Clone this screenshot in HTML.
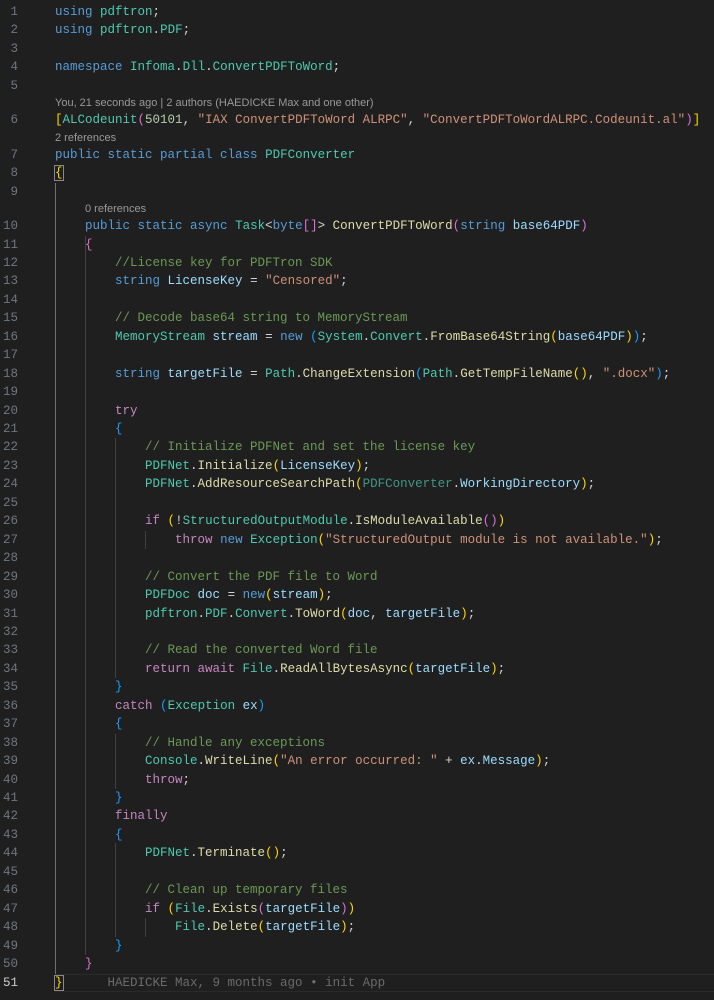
<!DOCTYPE html>
<html><head><meta charset="utf-8"><style>
body{margin:0;background:#1f1f1f;width:714px;height:1000px;overflow:hidden;position:relative;font-family:"Liberation Mono","DejaVu Sans Mono",monospace;font-size:12.5px;color:#d4d4d4}
.r{position:absolute;left:0;width:714px;height:18.45px;line-height:18.45px;white-space:pre}
.n{position:absolute;right:696px;color:#6e7681;text-align:right}
.c{position:absolute;left:55px}
.cl{position:absolute;left:55px;font-family:"Liberation Sans",sans-serif;font-size:11px;color:#999;white-space:pre;line-height:16px;height:16px}
.g{position:absolute;width:1px;background:#404040}
.k{color:#569cd6}.p{color:#c586c0}.t{color:#4ec9b0}.f{color:#dcdcaa}.v{color:#9cdcfe}.s{color:#ce9178}.m{color:#6a9955}.nu{color:#b5cea8}
.b1{color:#ffd700}.b2{color:#da70d6}.b3{color:#179fff}
</style></head><body>
<div class="g" style="left:55px;top:182.6px;height:791px;background:#707070"></div>
<div class="g" style="left:85px;top:235.5px;height:719.5px"></div>
<div class="g" style="left:115px;top:438.45px;height:239.85px"></div>
<div class="g" style="left:115px;top:733.65px;height:55.35px"></div>
<div class="g" style="left:115px;top:843.4px;height:93.2px"></div>
<div class="g" style="left:145px;top:530.7px;height:18.45px"></div>
<div class="g" style="left:145px;top:918.15px;height:18.45px"></div>

<div class="r" style="top:3px"><span class="n">1</span><span class="c"><span class="k">using</span> <span class="t">pdftron</span>;</span></div>
<div class="r" style="top:21.45px"><span class="n">2</span><span class="c"><span class="k">using</span> <span class="t">pdftron</span>.<span class="t">PDF</span>;</span></div>
<div class="r" style="top:39.9px"><span class="n">3</span></div>
<div class="r" style="top:58.35px"><span class="n">4</span><span class="c"><span class="k">namespace</span> <span class="t">Infoma</span>.<span class="t">Dll</span>.<span class="t">ConvertPDFToWord</span>;</span></div>
<div class="r" style="top:76.8px"><span class="n">5</span></div>
<div class="cl" style="top:95.25px">You, 21 seconds ago | 2 authors (HAEDICKE Max and one other)</div>
<div class="r" style="top:111.25px"><span class="n">6</span><span class="c"><span class="b1">[</span><span class="t">ALCodeunit</span><span class="b2">(</span><span class="nu">50101</span>, <span class="s">"IAX ConvertPDFToWord ALRPC"</span>, <span class="s">"ConvertPDFToWordALRPC.Codeunit.al"</span><span class="b2">)</span><span class="b1">]</span></span></div>
<div class="cl" style="top:129.7px">2 references</div>
<div class="r" style="top:145.7px"><span class="n">7</span><span class="c"><span class="k">public static partial class</span> <span class="t">PDFConverter</span></span></div>
<div class="r" style="top:164.15px"><span class="n">8</span><span class="c"><span class="b1" style="outline:1px solid #888">{</span></span></div>
<div class="r" style="top:182.6px"><span class="n">9</span></div>
<div class="cl" style="top:201.05px;left:85px">0 references</div>
<div class="r" style="top:217.05px"><span class="n">10</span><span class="c">    <span class="k">public static async</span> <span class="t">Task</span>&lt;<span class="k">byte</span><span class="b2">[]</span>&gt; <span class="f">ConvertPDFToWord</span><span class="b2">(</span><span class="k">string</span> <span class="v">base64PDF</span><span class="b2">)</span></span></div>
<div class="r" style="top:235.5px"><span class="n">11</span><span class="c">    <span class="b2">{</span></span></div>
<div class="r" style="top:253.95px"><span class="n">12</span><span class="c">        <span class="m">//License key for PDFTron SDK</span></span></div>
<div class="r" style="top:272.4px"><span class="n">13</span><span class="c">        <span class="k">string</span> <span class="v">LicenseKey</span> = <span class="s">"Censored"</span>;</span></div>
<div class="r" style="top:290.85px"><span class="n">14</span></div>
<div class="r" style="top:309.3px"><span class="n">15</span><span class="c">        <span class="m">// Decode base64 string to MemoryStream</span></span></div>
<div class="r" style="top:327.75px"><span class="n">16</span><span class="c">        <span class="t">MemoryStream</span> <span class="v">stream</span> = <span class="k">new</span> <span class="b3">(</span><span class="t">System</span>.<span class="t">Convert</span>.<span class="f">FromBase64String</span><span class="b1">(</span><span class="v">base64PDF</span><span class="b1">)</span><span class="b3">)</span>;</span></div>
<div class="r" style="top:346.2px"><span class="n">17</span></div>
<div class="r" style="top:364.65px"><span class="n">18</span><span class="c">        <span class="k">string</span> <span class="v">targetFile</span> = <span class="t">Path</span>.<span class="f">ChangeExtension</span><span class="b3">(</span><span class="t">Path</span>.<span class="f">GetTempFileName</span><span class="b1">()</span>, <span class="s">".docx"</span><span class="b3">)</span>;</span></div>
<div class="r" style="top:383.1px"><span class="n">19</span></div>
<div class="r" style="top:401.55px"><span class="n">20</span><span class="c">        <span class="p">try</span></span></div>
<div class="r" style="top:420px"><span class="n">21</span><span class="c">        <span class="b3">{</span></span></div>
<div class="r" style="top:438.45px"><span class="n">22</span><span class="c">            <span class="m">// Initialize PDFNet and set the license key</span></span></div>
<div class="r" style="top:456.9px"><span class="n">23</span><span class="c">            <span class="t">PDFNet</span>.<span class="f">Initialize</span><span class="b1">(</span><span class="v">LicenseKey</span><span class="b1">)</span>;</span></div>
<div class="r" style="top:475.35px"><span class="n">24</span><span class="c">            <span class="t">PDFNet</span>.<span class="f">AddResourceSearchPath</span><span class="b1">(</span><span class="t" style="opacity:.7">PDFConverter</span>.<span class="v">WorkingDirectory</span><span class="b1">)</span>;</span></div>
<div class="r" style="top:493.8px"><span class="n">25</span></div>
<div class="r" style="top:512.25px"><span class="n">26</span><span class="c">            <span class="p">if</span> <span class="b1">(</span>!<span class="t">StructuredOutputModule</span>.<span class="f">IsModuleAvailable</span><span class="b2">()</span><span class="b1">)</span></span></div>
<div class="r" style="top:530.7px"><span class="n">27</span><span class="c">                <span class="p">throw</span> <span class="k">new</span> <span class="t">Exception</span><span class="b1">(</span><span class="s">"StructuredOutput module is not available."</span><span class="b1">)</span>;</span></div>
<div class="r" style="top:549.15px"><span class="n">28</span></div>
<div class="r" style="top:567.6px"><span class="n">29</span><span class="c">            <span class="m">// Convert the PDF file to Word</span></span></div>
<div class="r" style="top:586.05px"><span class="n">30</span><span class="c">            <span class="t">PDFDoc</span> <span class="v">doc</span> = <span class="k">new</span><span class="b1">(</span><span class="v">stream</span><span class="b1">)</span>;</span></div>
<div class="r" style="top:604.5px"><span class="n">31</span><span class="c">            <span class="t">pdftron</span>.<span class="t">PDF</span>.<span class="t">Convert</span>.<span class="f">ToWord</span><span class="b1">(</span><span class="v">doc</span>, <span class="v">targetFile</span><span class="b1">)</span>;</span></div>
<div class="r" style="top:622.95px"><span class="n">32</span></div>
<div class="r" style="top:641.4px"><span class="n">33</span><span class="c">            <span class="m">// Read the converted Word file</span></span></div>
<div class="r" style="top:659.85px"><span class="n">34</span><span class="c">            <span class="p">return await</span> <span class="t">File</span>.<span class="f">ReadAllBytesAsync</span><span class="b1">(</span><span class="v">targetFile</span><span class="b1">)</span>;</span></div>
<div class="r" style="top:678.3px"><span class="n">35</span><span class="c">        <span class="b3">}</span></span></div>
<div class="r" style="top:696.75px"><span class="n">36</span><span class="c">        <span class="p">catch</span> <span class="b3">(</span><span class="t">Exception</span> <span class="v">ex</span><span class="b3">)</span></span></div>
<div class="r" style="top:715.2px"><span class="n">37</span><span class="c">        <span class="b3">{</span></span></div>
<div class="r" style="top:733.65px"><span class="n">38</span><span class="c">            <span class="m">// Handle any exceptions</span></span></div>
<div class="r" style="top:752.1px"><span class="n">39</span><span class="c">            <span class="t">Console</span>.<span class="f">WriteLine</span><span class="b1">(</span><span class="s">"An error occurred: "</span> + <span class="v">ex</span>.<span class="v">Message</span><span class="b1">)</span>;</span></div>
<div class="r" style="top:770.55px"><span class="n">40</span><span class="c">            <span class="p">throw</span>;</span></div>
<div class="r" style="top:789px"><span class="n">41</span><span class="c">        <span class="b3">}</span></span></div>
<div class="r" style="top:807.45px"><span class="n">42</span><span class="c">        <span class="p">finally</span></span></div>
<div class="r" style="top:825.9px"><span class="n">43</span><span class="c">        <span class="b3">{</span></span></div>
<div class="r" style="top:844.35px"><span class="n">44</span><span class="c">            <span class="t">PDFNet</span>.<span class="f">Terminate</span><span class="b1">()</span>;</span></div>
<div class="r" style="top:862.8px"><span class="n">45</span></div>
<div class="r" style="top:881.25px"><span class="n">46</span><span class="c">            <span class="m">// Clean up temporary files</span></span></div>
<div class="r" style="top:899.7px"><span class="n">47</span><span class="c">            <span class="p">if</span> <span class="b1">(</span><span class="t">File</span>.<span class="f">Exists</span><span class="b2">(</span><span class="v">targetFile</span><span class="b2">)</span><span class="b1">)</span></span></div>
<div class="r" style="top:918.15px"><span class="n">48</span><span class="c">                <span class="t">File</span>.<span class="f">Delete</span><span class="b1">(</span><span class="v">targetFile</span><span class="b1">)</span>;</span></div>
<div class="r" style="top:936.6px"><span class="n">49</span><span class="c">        <span class="b3">}</span></span></div>
<div class="r" style="top:955.05px"><span class="n">50</span><span class="c">    <span class="b2">}</span></span></div>
<div class="r" style="top:973.5px;border-top:1px solid #2a2a2a;border-bottom:1px solid #2a2a2a;box-sizing:border-box;left:55px;width:659px"></div>
<div class="r" style="top:973.5px"><span class="n" style="color:#cccccc">51</span><span class="c"><span class="b1" style="outline:1px solid #888">}</span>      <span style="color:#6b6b6b">HAEDICKE Max, 9 months ago • init App</span></span></div>
</body></html>
